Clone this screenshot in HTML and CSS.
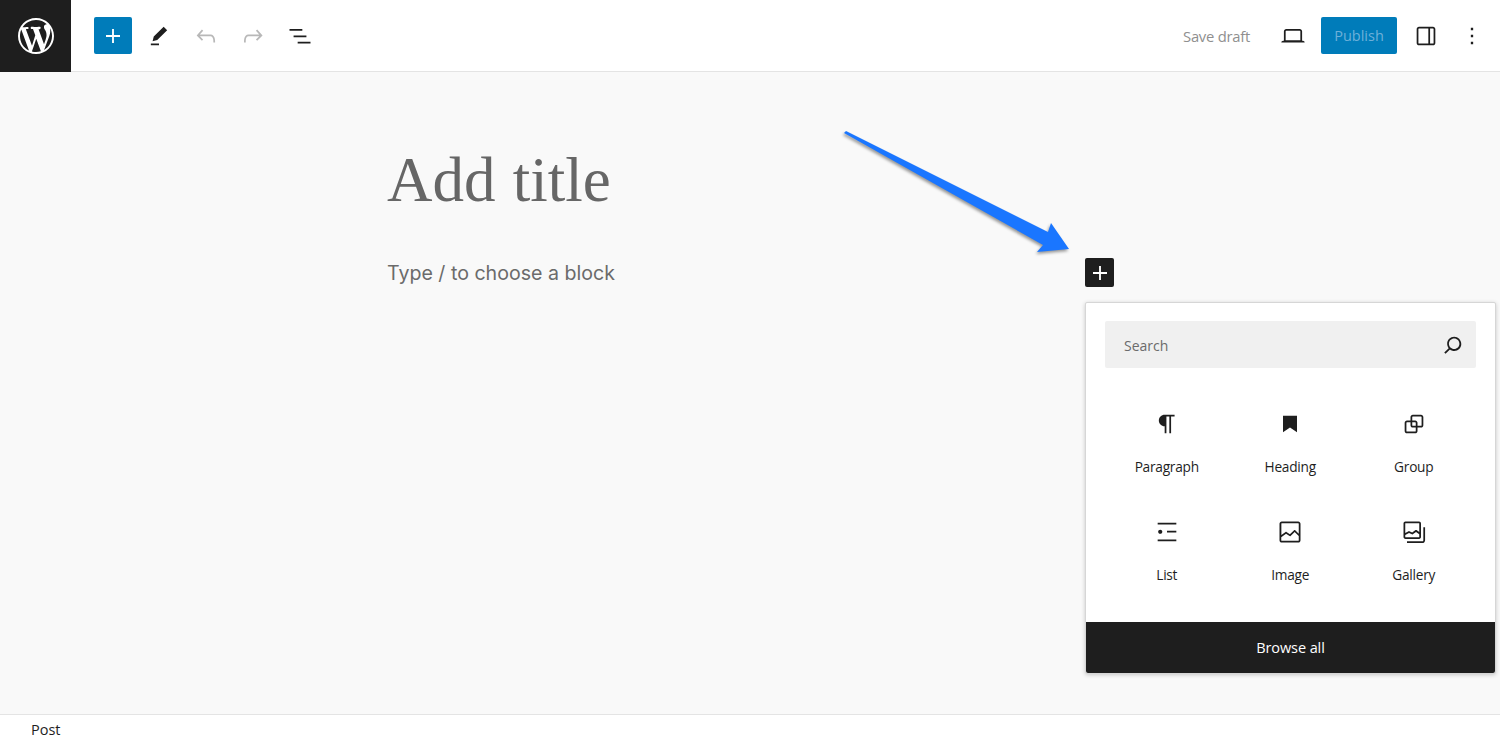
FILE: index.html
```html
<!DOCTYPE html>
<html lang="en">
<head>
    <meta charset="UTF-8">
    <title>Add New Post</title>
    <link rel="stylesheet" href="styles.css">
</head>
<body>
    <header class="topbar">
        <div class="topbar-left">
            <a class="wp-logo" href="#">
                <svg viewBox="0 0 20 20" width="36" height="36"><path d="M20 10c0-5.51-4.49-10-10-10C4.48 0 0 4.49 0 10c0 5.52 4.48 10 10 10 5.51 0 10-4.48 10-10zM7.78 15.37L4.37 6.22c.55-.02 1.17-.08 1.17-.08.5-.06.44-1.13-.06-1.11 0 0-1.45.11-2.37.11-.18 0-.37 0-.58-.01C4.12 2.69 6.87 1.11 10 1.11c2.33 0 4.45.87 6.05 2.34-.68-.11-1.65.39-1.65 1.58 0 .74.45 1.36.9 2.1.35.61.55 1.36.55 2.46 0 1.49-1.4 5-1.4 5l-3.03-8.37c.54-.02.82-.17.82-.17.5-.05.44-1.25-.06-1.22 0 0-1.44.12-2.38.12-.87 0-2.33-.12-2.33-.12-.5-.03-.56 1.2-.06 1.22l.92.08 1.26 3.41zM17.41 10c.24-.64.74-1.87.43-4.25.7 1.29 1.05 2.71 1.05 4.25 0 3.29-1.73 6.24-4.4 7.78.97-2.59 1.94-5.2 2.92-7.78zM6.1 18.09C3.12 16.65 1.11 13.53 1.11 10c0-1.3.23-2.48.72-3.59C3.25 10.3 4.67 14.2 6.1 18.09zm4.03-6.63l2.58 6.98c-.86.29-1.76.45-2.71.45-.79 0-1.57-.11-2.29-.33.81-2.38 1.62-4.74 2.42-7.1z"/></svg>
            </a>
            <button class="add-btn">
                <svg viewBox="0 0 24 24" width="28" height="28"><path d="M18 11.2h-5.2V6h-1.6v5.2H6v1.6h5.2V18h1.6v-5.2H18z"/></svg>
            </button>
            <div class="tools">
                <button class="icon-btn">
                    <svg viewBox="0 0 24 24" width="28" height="28"><path d="m19 7-3-3-8.5 8.5-1 4 4-1L19 7Zm-7 11.5H5V20h7v-1.5Z"/></svg>
                </button>
                <button class="icon-btn muted">
                    <svg viewBox="0 0 24 24" width="28" height="28"><path d="M18.3 11.7c-.6-.6-1.4-.9-2.3-.9H6.7l2.9-3.3-1.1-1-4.5 5L8.5 16l1-1-2.7-2.7H16c.5 0 .9.2 1.3.5 1 1 1 3.4 1 4.5v.3h1.5v-.2c0-1.5 0-4.3-1.5-5.7z"/></svg>
                </button>
                <button class="icon-btn muted">
                    <svg viewBox="0 0 24 24" width="28" height="28"><path d="M15.6 6.5l-1.1 1 2.9 3.3H8c-.9 0-1.7.3-2.3.9-1.4 1.5-1.4 4.2-1.4 5.6v.2h1.5v-.3c0-1.1 0-3.5 1-4.5.3-.3.7-.5 1.3-.5h9.2L14.5 15l1.1 1.1 4.6-4.6-4.6-5z"/></svg>
                </button>
                <button class="icon-btn">
                    <svg viewBox="0 0 24 24" width="28" height="28"><path d="M3 6h11v1.5H3V6Zm3.5 5.5h11V13h-11v-1.5ZM21 17H10v1.5h11V17Z"/></svg>
                </button>
            </div>
        </div>
        <div class="topbar-right">
            <span class="save-draft">Save draft</span>
            <button class="icon-btn narrow preview">
                <svg viewBox="0 0 24 24" width="28" height="28"><path d="M20.5 16h-.7V8c0-1.1-.9-2-2-2H6.2c-1.1 0-2 .9-2 2v8h-.7c-.8 0-1.5.7-1.5 1.5h20c0-.8-.7-1.5-1.5-1.5zM5.7 8c0-.3.2-.5.5-.5h11.6c.3 0 .5.2.5.5v7.6H5.7V8z"/></svg>
            </button>
            <button class="publish-btn">Publish</button>
            <button class="icon-btn narrow">
                <svg viewBox="0 0 24 24" width="28" height="28"><path d="M18 4H6c-1.1 0-2 .9-2 2v12c0 1.1.9 2 2 2h12c1.1 0 2-.9 2-2V6c0-1.1-.9-2-2-2zm-4 14.5H6c-.3 0-.5-.2-.5-.5V6c0-.3.2-.5.5-.5h8v13zm4.5-.5c0 .3-.2.5-.5.5h-2.5v-13H18c.3 0 .5.2.5.5v12z"/></svg>
            </button>
            <button class="icon-btn narrow">
                <svg viewBox="0 0 24 24" width="28" height="28"><path d="M13 19h-2v-2h2v2zm0-6h-2v-2h2v2zm0-6h-2V5h2v2z"/></svg>
            </button>
        </div>
    </header>

    <main class="canvas">
        <div class="post-column">
            <h1 class="post-title">Add title</h1>
            <div class="block-row">
                <p class="block-hint">Type / to choose a block</p>
                <button class="block-add">
                    <svg viewBox="0 0 24 24" width="28" height="28"><path d="M18 11.2h-5.2V6h-1.6v5.2H6v1.6h5.2V18h1.6v-5.2H18z"/></svg>
                </button>
            </div>
        </div>

        <!-- annotation arrow drawn over the screenshot -->
        <svg class="arrow" viewBox="0 0 240 130" width="240" height="130">
            <polygon points="4,7 6,5 208,106 211,97 229,123 197,126 203,119"/>
        </svg>

        <div class="inserter">
            <div class="inserter-body">
                <div class="search">
                    <span>Search</span>
                    <svg viewBox="0 0 24 24" width="28" height="28"><path d="M13 5c-3.3 0-6 2.7-6 6 0 1.4.5 2.7 1.3 3.7l-3.8 3.8 1.1 1.1 3.8-3.8c1 .8 2.3 1.3 3.7 1.3 3.3 0 6-2.7 6-6S16.3 5 13 5zm0 10.5c-2.5 0-4.5-2-4.5-4.5s2-4.5 4.5-4.5 4.5 2 4.5 4.5-2 4.5-4.5 4.5z"/></svg>
                </div>
                <div class="block-grid">
                    <div class="block-item">
                        <svg viewBox="0 0 24 24" width="28" height="28"><path d="m9.99609 14v-.2251l.00391.0001v6.225h1.5v-14.5h2.5v14.5h1.5v-14.5h3v-1.5h-8.50391c-2.76142 0-5 2.23858-5 5 0 2.7614 2.23858 5 5 5z"/></svg>
                        <span>Paragraph</span>
                    </div>
                    <div class="block-item">
                        <svg viewBox="0 0 24 24" width="28" height="28"><path d="M6 5h12v14l-6-4-6 4z"/></svg>
                        <span>Heading</span>
                    </div>
                    <div class="block-item">
                        <svg viewBox="0 0 24 24" width="28" height="28"><path d="M18 4h-7c-1.1 0-2 .9-2 2v3H6c-1.1 0-2 .9-2 2v7c0 1.1.9 2 2 2h7c1.1 0 2-.9 2-2v-3h3c1.1 0 2-.9 2-2V6c0-1.1-.9-2-2-2zm-4.5 14c0 .3-.2.5-.5.5H6c-.3 0-.5-.2-.5-.5v-7c0-.3.2-.5.5-.5h3V13c0 1.1.9 2 2 2h2.5v3zm0-4.5H11c-.3 0-.5-.2-.5-.5v-2.5H13c.3 0 .5.2.5.5v2.5zm5-.5c0 .3-.2.5-.5.5h-3V11c0-1.1-.9-2-2-2h-2.5V6c0-.3.2-.5.5-.5h7c.3 0 .5.2.5.5v7z"/></svg>
                        <span>Group</span>
                    </div>
                    <div class="block-item">
                        <svg viewBox="0 0 24 24" width="28" height="28"><path d="M4 4v1.5h16V4H4zm8 8.5h8V11h-8v1.5zM4 20h16v-1.5H4V20zm4-8.2c0-1-.8-1.8-1.8-1.8s-1.8.8-1.8 1.8.8 1.8 1.8 1.8 1.8-.8 1.8-1.8z"/></svg>
                        <span>List</span>
                    </div>
                    <div class="block-item">
                        <svg viewBox="0 0 24 24" width="28" height="28"><path d="M19 3H5c-1.1 0-2 .9-2 2v14c0 1.1.9 2 2 2h14c1.1 0 2-.9 2-2V5c0-1.1-.9-2-2-2zM5 4.5h14c.3 0 .5.2.5.5v8.4l-3-2.9c-.3-.3-.8-.3-1 0L11.9 14 9 12c-.3-.2-.6-.2-.8 0l-3.6 2.6V5c-.1-.3.1-.5.4-.5zm14 15H5c-.3 0-.5-.2-.5-.5v-2.4l4.1-3 3 1.9c.3.2.7.2.9-.1L16 12l3.5 3.4V19c0 .3-.2.5-.5.5z"/></svg>
                        <span>Image</span>
                    </div>
                    <div class="block-item">
                        <svg viewBox="0 0 24 24" width="28" height="28"><path fill-rule="evenodd" d="M16.375 4.5H4.625a.125.125 0 0 0-.125.125v8.254l2.859-1.54a.75.75 0 0 1 .68-.016l2.384 1.142 2.89-2.074a.75.75 0 0 1 .874 0l2.313 1.66V4.625a.125.125 0 0 0-.125-.125Zm.125 9.398-2.75-1.975-2.813 2.02a.75.75 0 0 1-.76.067l-2.444-1.17L4.5 14.583v1.792c0 .069.056.125.125.125h11.75a.125.125 0 0 0 .125-.125v-2.477ZM4.625 3C3.728 3 3 3.728 3 4.625v11.75C3 17.273 3.728 18 4.625 18h11.75c.898 0 1.625-.727 1.625-1.625V4.625C18 3.728 17.273 3 16.375 3H4.625ZM20 8v11c0 .69-.56 1-1.25 1H6v1.5h12.75A2.75 2.75 0 0 0 21.5 19V8H20Z"/></svg>
                        <span>Gallery</span>
                    </div>
                </div>
            </div>
            <button class="browse-all">Browse all</button>
        </div>
    </main>

    <footer class="statusbar">Post</footer>
</body>
</html>
```

FILE: styles.css
```css
* {
    box-sizing: border-box;
}

html, body {
    height: 100%;
}

body {
    margin: 0;
    display: flex;
    flex-direction: column;
    height: 100vh;
    overflow: hidden;
    font-family: 'Open Sans', sans-serif;
    color: #1e1e1e;
    background-color: #fff;
}

button {
    padding: 0;
    border: none;
    background: none;
    font-family: inherit;
    display: flex;
    align-items: center;
    justify-content: center;
}

svg {
    display: block;
    fill: currentColor;
}

.topbar {
    height: 72px;
    flex-shrink: 0;
    display: flex;
    justify-content: space-between;
    align-items: center;
    background-color: #fff;
    border-bottom: 1px solid #e4e4e4;
}

.topbar-left,
.topbar-right,
.tools {
    display: flex;
    align-items: center;
}

.topbar-left {
    height: 100%;
}

.wp-logo {
    width: 71px;
    height: 72px;
    display: flex;
    align-items: center;
    justify-content: center;
    color: #fff;
    background-color: #1e1e1e;
}

.add-btn {
    width: 38px;
    height: 37px;
    margin-left: 23px;
    margin-right: 3.5px;
    border-radius: 2px;
    color: #fff;
    background-color: #007cba;
}

.icon-btn {
    width: 47px;
    height: 37px;
    color: #1e1e1e;
}

.icon-btn.muted {
    color: #b8b8b8;
}

.icon-btn.narrow {
    width: 42px;
}

.topbar-right {
    padding-right: 7px;
    gap: 4px;
}

.save-draft {
    margin-right: 18px;
    font-size: 14.8px;
    letter-spacing: -0.25px;
    color: #8f8f8f;
}

.preview {
    margin-right: 3px;
}

.publish-btn {
    width: 76px;
    height: 37px;
    margin-right: 4px;
    border-radius: 2px;
    font-size: 14.5px;
    color: #6db0d9;
    background-color: #007cba;
}

.canvas {
    flex: 1;
    position: relative;
    background-color: #f9f9f9;
}

.post-column {
    width: 728px;
    margin: 0 auto;
    padding: 66px 0 0 1px;
}

.post-title {
    margin: 0;
    font-family: 'Liberation Serif', serif;
    font-size: 63px;
    font-weight: 400;
    line-height: 84px;
    word-spacing: 1.5px;
    color: #666;
}

.block-row {
    margin-top: 36px;
    display: flex;
    justify-content: space-between;
    align-items: center;
}

.block-hint {
    margin: 0;
    font-family: 'Inter', sans-serif;
    font-size: 19.6px;
    color: #6b6b6b;
}

.block-add {
    width: 29px;
    height: 29px;
    border-radius: 2px;
    color: #fff;
    background-color: #1e1e1e;
}

.arrow {
    position: absolute;
    left: 840px;
    top: 54px;
    fill: #1a76ff;
    filter: drop-shadow(-1px 2px 1.5px rgba(0, 0, 0, 0.4));
}

.inserter {
    position: absolute;
    left: 1085px;
    top: 230px;
    width: 411px;
    height: 372px;
    display: flex;
    flex-direction: column;
    border: 1px solid #d6d6d6;
    border-radius: 2px;
    background-color: #fff;
    box-shadow: 0 1px 4px rgba(0, 0, 0, 0.2);
}

.inserter-body {
    flex: 1;
    padding: 18px 19px 0;
}

.search {
    height: 47px;
    padding: 0 9px 0 19px;
    display: flex;
    justify-content: space-between;
    align-items: center;
    border-radius: 2px;
    font-size: 14px;
    color: #6b6b6b;
    background-color: #f0f0f0;
}

.search span {
    padding-top: 2px;
}

.search svg {
    color: #1e1e1e;
}

.block-grid {
    margin-top: 24px;
    display: grid;
    grid-template-columns: repeat(3, 123.5px);
    row-gap: 20px;
}

.block-item {
    height: 88px;
    display: flex;
    flex-direction: column;
    align-items: center;
    padding-top: 18px;
    gap: 19px;
    font-size: 13.7px;
    letter-spacing: -0.25px;
    line-height: 20px;
}

.browse-all {
    height: 51px;
    flex-shrink: 0;
    width: 100%;
    font-size: 14.5px;
    letter-spacing: -0.1px;
    color: #fff;
    background-color: #1e1e1e;
    border-radius: 0 0 2px 2px;
}

.statusbar {
    height: 29px;
    flex-shrink: 0;
    padding-left: 31px;
    display: flex;
    align-items: center;
    font-size: 14.5px;
    background-color: #fff;
    border-top: 1px solid #e4e4e4;
}
```
